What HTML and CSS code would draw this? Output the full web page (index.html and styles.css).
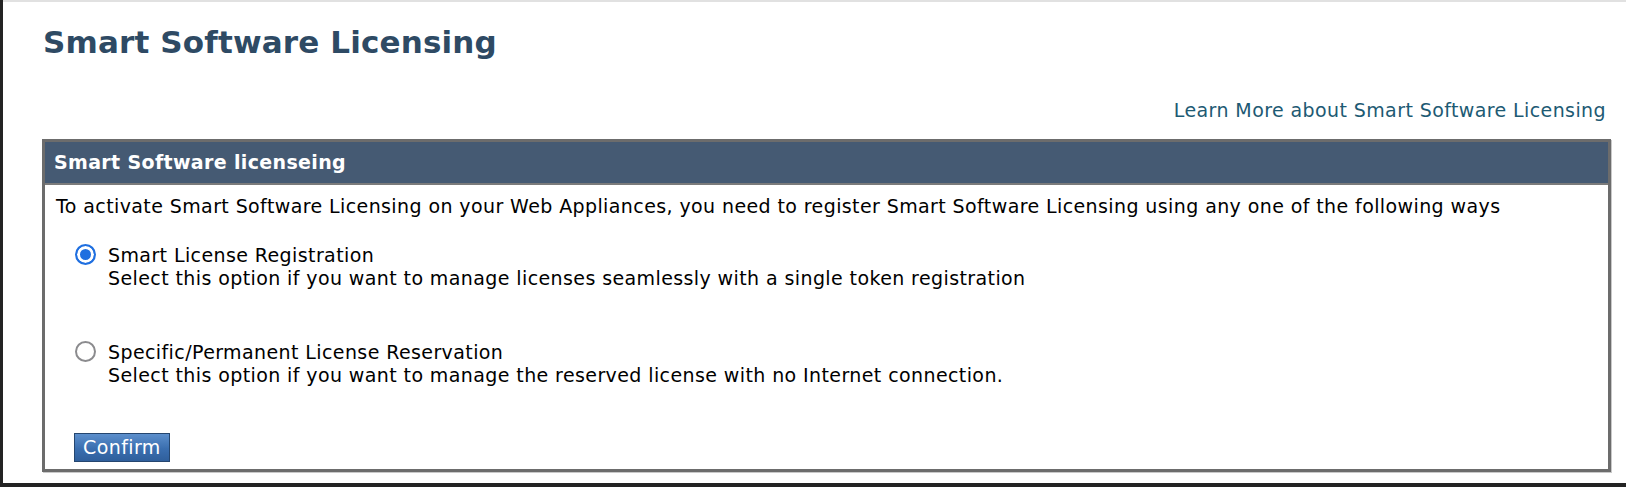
FILE: index.html
```html
<!DOCTYPE html>
<html lang="en">
<head>
<meta charset="utf-8">
<title>Smart Software Licensing</title>
<link rel="stylesheet" href="styles.css">
</head>
<body>
<div class="window">
  <h1 class="title">Smart Software Licensing</h1>
  <div class="links"><a class="learn" href="#">Learn More about Smart Software Licensing</a></div>
  <div class="panel">
    <div class="panel-head">Smart Software licenseing</div>
    <div class="panel-body">
      <p class="intro">To activate Smart Software Licensing on your Web Appliances, you need to register Smart Software Licensing using any one of the following ways</p>
      <label class="option">
        <input class="radio" type="radio" name="mode" checked>
        <span class="option-text">
          <span class="option-name">Smart License Registration</span>
          <span class="option-desc">Select this option if you want to manage licenses seamlessly with a single token registration</span>
        </span>
      </label>
      <label class="option option-second">
        <input class="radio" type="radio" name="mode">
        <span class="option-text">
          <span class="option-name">Specific/Permanent License Reservation</span>
          <span class="option-desc">Select this option if you want to manage the reserved license with no Internet connection.</span>
        </span>
      </label>
      <button class="btn" type="button">Confirm</button>
    </div>
  </div>
</div>
</body>
</html>
```

FILE: styles.css
```css
html, body {
  margin: 0;
  padding: 0;
}
body {
  background: #232323;
  width: 1626px;
  height: 487px;
  overflow: hidden;
  font-family: "DejaVu Sans", Verdana, sans-serif;
  color: #000;
}
.window {
  margin-left: 3px;
  height: 481px;
  background: #ffffff;
  border-top: 2px solid #e1e1e1;
  display: flex;
  flex-direction: column;
}
.title {
  margin: 20px 0 0 40px;
  font-size: 31px;
  line-height: 40px;
  letter-spacing: 0.15px;
  font-weight: bold;
  color: #2e4a64;
}
.links {
  margin: 37px 18px 0 0;
  text-align: right;
  font-size: 19px;
  line-height: 22px;
  letter-spacing: 0.4px;
  padding-right: 2px;
}
.learn {
  color: #1d5a73;
  text-decoration: none;
}
.panel {
  margin: 18px 15px 0 39px;
  border: 3px solid #6c6c6c;
  box-shadow: 1px 1px 0 #c9c9c9;
  background: #fff;
}
.panel-head {
  background: #455a73;
  color: #ffffff;
  font-weight: bold;
  font-size: 19px;
  letter-spacing: 0.35px;
  line-height: 41px;
  padding-left: 9px;
  border-bottom: 2px solid #7b7b7b;
}
.panel-body {
  padding: 10px 11px 7px 11px;
  display: flex;
  flex-direction: column;
  align-items: flex-start;
  font-size: 19px;
  line-height: 22px;
  letter-spacing: 0.4px;
}
.intro {
  margin: 0;
}
.option {
  display: flex;
  align-items: flex-start;
  gap: 12px;
  margin: 27px 0 0 19px;
  line-height: 23px;
}
.option-second {
  margin-top: 51px;
}
.option-text {
  display: flex;
  flex-direction: column;
}
.radio {
  appearance: none;
  -webkit-appearance: none;
  margin: 0;
  width: 21px;
  height: 21px;
  border-radius: 50%;
  border: 2px solid #8b8b8e;
  background: #fff;
  flex: none;
}
.radio:checked {
  border-color: #1f6fe0;
  background: #1f6fe0;
  box-shadow: inset 0 0 0 3px #ffffff;
}
.btn {
  margin: 46px 0 0 18px;
  height: 29px;
  padding: 0 8px;
  font-family: "DejaVu Sans", Verdana, sans-serif;
  font-size: 19px;
  letter-spacing: 0.4px;
  line-height: 27px;
  color: #ffffff;
  background: linear-gradient(#5c8fcc, #3a6eaf 55%, #2f5f9c);
  border: 1px solid #25466f;
  border-radius: 0;
}
```
